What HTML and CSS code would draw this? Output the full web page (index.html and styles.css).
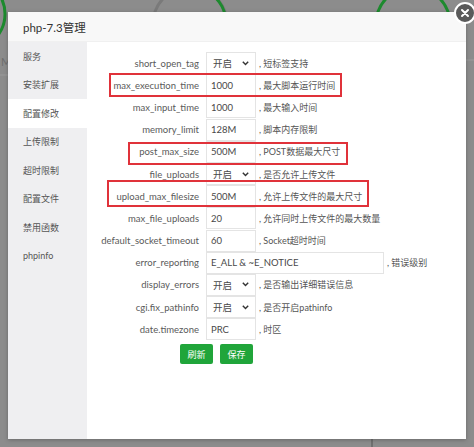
FILE: index.html
```html
<!DOCTYPE html>
<html lang="zh-CN">
<head>
<meta charset="utf-8">
<title>php-7.3管理</title>
<link rel="stylesheet" href="styles.css">
</head>
<body>
<div class="screen">
  <svg class="backdrop" width="474" height="447" viewBox="0 0 474 447">
    <circle cx="-30" cy="14" r="35" fill="none" stroke="#1d8a2e" stroke-width="3"/>
    <circle cx="190" cy="24" r="37" fill="none" stroke="#7a7a7a" stroke-width="3"/>
    <path d="M 206 -9 A 37 37 0 0 1 225 14" fill="none" stroke="#1d8a2e" stroke-width="3"/>
    <circle cx="413" cy="24" r="37" fill="none" stroke="#1d8a2e" stroke-width="3"/>
    <line x1="0" y1="75" x2="8" y2="75" stroke="#9a9a9a" stroke-width="1"/>
    <line x1="466" y1="60" x2="474" y2="60" stroke="#9c9c9c" stroke-width="1"/>
    <line x1="372" y1="439" x2="372" y2="447" stroke="#555" stroke-width="1"/>
  </svg>
  <span class="bg-letter">M</span>
  <div class="dialog">
    <div class="title">php-7.3管理</div>
    <div class="body">
      <ul class="side">
        <li>服务</li>
        <li>安装扩展</li>
        <li class="active">配置修改</li>
        <li>上传限制</li>
        <li>超时限制</li>
        <li>配置文件</li>
        <li>禁用函数</li>
        <li>phpinfo</li>
      </ul>
      <div class="content">
        <div class="form">
          <div class="row"><span class="lbl">short_open_tag</span><span class="field sel">开启<svg class="chev" width="7" height="5" viewBox="0 0 7 5"><path d="M0.8 0.8 L3.5 3.6 L6.2 0.8" fill="none" stroke="#333" stroke-width="1.4"/></svg></span><span class="desc">, 短标签支持</span></div>
          <div class="row"><span class="lbl">max_execution_time</span><span class="field">1000</span><span class="desc">, 最大脚本运行时间</span></div>
          <div class="row"><span class="lbl">max_input_time</span><span class="field">1000</span><span class="desc">, 最大输入时间</span></div>
          <div class="row"><span class="lbl">memory_limit</span><span class="field">128M</span><span class="desc">, 脚本内存限制</span></div>
          <div class="row"><span class="lbl">post_max_size</span><span class="field">500M</span><span class="desc">, POST数据最大尺寸</span></div>
          <div class="row"><span class="lbl">file_uploads</span><span class="field sel">开启<svg class="chev" width="7" height="5" viewBox="0 0 7 5"><path d="M0.8 0.8 L3.5 3.6 L6.2 0.8" fill="none" stroke="#333" stroke-width="1.4"/></svg></span><span class="desc">, 是否允许上传文件</span></div>
          <div class="row"><span class="lbl">upload_max_filesize</span><span class="field">500M</span><span class="desc">, 允许上传文件的最大尺寸</span></div>
          <div class="row"><span class="lbl">max_file_uploads</span><span class="field">20</span><span class="desc">, 允许同时上传文件的最大数量</span></div>
          <div class="row"><span class="lbl">default_socket_timeout</span><span class="field">60</span><span class="desc">, Socket超时时间</span></div>
          <div class="row"><span class="lbl">error_reporting</span><span class="field wide">E_ALL &amp; ~E_NOTICE</span><span class="desc">, 错误级别</span></div>
          <div class="row"><span class="lbl">display_errors</span><span class="field sel">开启<svg class="chev" width="7" height="5" viewBox="0 0 7 5"><path d="M0.8 0.8 L3.5 3.6 L6.2 0.8" fill="none" stroke="#333" stroke-width="1.4"/></svg></span><span class="desc">, 是否输出详细错误信息</span></div>
          <div class="row"><span class="lbl">cgi.fix_pathinfo</span><span class="field sel">开启<svg class="chev" width="7" height="5" viewBox="0 0 7 5"><path d="M0.8 0.8 L3.5 3.6 L6.2 0.8" fill="none" stroke="#333" stroke-width="1.4"/></svg></span><span class="desc">, 是否开启pathinfo</span></div>
          <div class="row"><span class="lbl">date.timezone</span><span class="field">PRC</span><span class="desc">, 时区</span></div>
          <div class="mark m1"></div>
          <div class="mark m2"></div>
          <div class="mark m3"></div>
        </div>
        <div class="actions">
          <button class="btn">刷新</button>
          <button class="btn">保存</button>
        </div>
      </div>
    </div>
    <span class="close"><svg width="10" height="10" viewBox="0 0 10 10"><path d="M2 2 L8 8 M8 2 L2 8" stroke="#fff" stroke-width="2" stroke-linecap="round"/></svg></span>
  </div>
</div>
</body>
</html>
```

FILE: styles.css
```css
* { box-sizing: border-box; }
html, body { margin: 0; padding: 0; }
body {
  width: 474px;
  height: 447px;
  overflow: hidden;
  background: #8c8c8c;
  font-family: "Lato", "Noto Sans CJK SC", sans-serif;
  color: #555;
}
.screen {
  position: relative;
  width: 474px;
  height: 447px;
  padding: 12px 8px 8px 8px;
}
.backdrop {
  position: absolute;
  left: 0;
  top: 0;
}
.bg-letter {
  position: absolute;
  left: 1px;
  top: 55px;
  font-size: 11px;
  color: #6e6e6e;
}
.dialog {
  position: relative;
  width: 458px;
  height: 427px;
  background: #fff;
  display: flex;
  flex-direction: column;
  box-shadow: 0 1px 4px rgba(0,0,0,0.25);
}
.title {
  height: 30px;
  flex-shrink: 0;
  background: #f8f8f8;
  border-bottom: 1px solid #f0f0f0;
  padding-left: 15px;
  display: flex;
  align-items: center;
  font-size: 11.5px;
  color: #333;
}
.body {
  flex: 1;
  display: flex;
}
.side {
  list-style: none;
  margin: 0;
  padding: 0;
  width: 79px;
  flex-shrink: 0;
  background: #efeff1;
}
.side li {
  height: 28.5px;
  display: flex;
  align-items: center;
  padding-left: 15px;
  font-size: 9px;
  color: #555;
}
.side li.active {
  background: #fff;
}
.content {
  flex: 1;
  padding-top: 10px;
}
.form {
  position: relative;
}
.row {
  display: flex;
  align-items: center;
  height: 22.2px;
}
.lbl {
  width: 112px;
  flex-shrink: 0;
  text-align: right;
  font-size: 9.5px;
  color: #5a5a5a;
}
.field {
  margin-left: 7px;
  width: 50px;
  height: 22px;
  flex-shrink: 0;
  border: 1px solid #e4e4e4;
  padding: 0 4px;
  display: flex;
  align-items: center;
  font-size: 9.5px;
  color: #484848;
}
.field.wide {
  width: 178px;
}
.field.sel {
  justify-content: space-between;
  padding: 0 6px 0 6px;
}
.chev {
  display: block;
}
.desc {
  margin-left: 3px;
  font-size: 9px;
  color: #555;
  white-space: nowrap;
}
.mark {
  position: absolute;
  border: 2px solid #e0323a;
}
.m1 { left: 22px; top: 21px; width: 233px; height: 24px; }
.m2 { left: 41px; top: 90px; width: 220px; height: 23px; }
.m3 { left: 20px; top: 128px; width: 262px; height: 27px; }
.actions {
  display: flex;
  gap: 7px;
  padding-left: 93px;
  margin-top: 4px;
}
.btn {
  width: 33px;
  height: 20px;
  border: none;
  border-radius: 2px;
  background: #20a53a;
  color: #fff;
  font-family: "Noto Sans CJK SC", sans-serif;
  font-size: 9px;
  padding: 0;
}
.close {
  position: absolute;
  right: -10px;
  top: -10px;
  width: 22px;
  height: 22px;
  border-radius: 50%;
  background: #5a5a5a;
  border: 2px solid #fff;
  display: flex;
  align-items: center;
  justify-content: center;
}
```
